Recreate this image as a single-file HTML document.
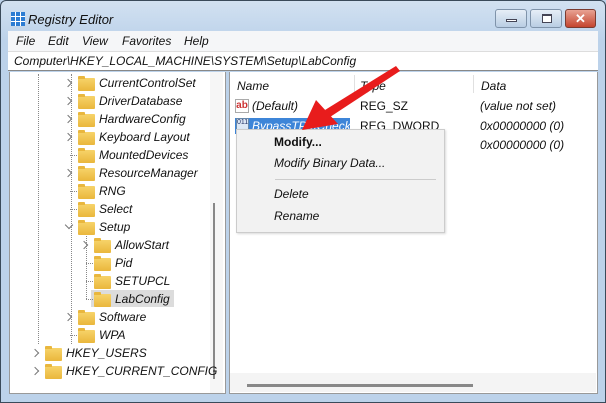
<!DOCTYPE html>
<html><head><style>
*{margin:0;padding:0;box-sizing:border-box}
body{width:606px;height:403px;overflow:hidden;background:#bcd2ea;font-family:"Liberation Sans",sans-serif;font-style:italic;font-size:12px;color:#111;position:relative}
.a{position:absolute;white-space:nowrap}
.f{position:absolute;width:17px;height:13px;background:linear-gradient(#f7d36a,#eab73c);border-radius:1px}
.f:before{content:"";position:absolute;left:0;top:-2px;width:7px;height:3px;background:#e9b73e;border-radius:1px 1px 0 0}
.ch{position:absolute;width:6px;height:6px;border-right:1.5px solid #777;border-bottom:1.5px solid #777}
</style></head><body>
<div class="a" style="left:0;top:0;width:606px;height:403px;border:1px solid #3a4a5a;border-radius:6px 6px 0 0;background:linear-gradient(#d2e1f1,#bcd2ea 40px)"></div>
<div class="a" style="left:11px;top:12px;width:14px;height:14px;background:repeating-linear-gradient(90deg,#2b7cd3 0 4px,#fff 4px 5px),#2b7cd3"></div>
<div class="a" style="left:11px;top:16px;width:14px;height:1px;background:#fff"></div>
<div class="a" style="left:11px;top:21px;width:14px;height:1px;background:#fff"></div>
<div class="a" style="left:28px;top:12px;font-size:13px">Registry Editor</div>
<div class="a" style="left:495px;top:9px;width:32px;height:19px;border:1px solid #7f93aa;border-radius:3px;background:linear-gradient(#e6eef7,#b9cde3)"><div class="a" style="left:10px;top:9px;width:11px;height:3px;border:1px solid #445;background:#fff"></div></div>
<div class="a" style="left:530px;top:9px;width:32px;height:19px;border:1px solid #7f93aa;border-radius:3px;background:linear-gradient(#e6eef7,#b9cde3)"><div class="a" style="left:11px;top:4px;width:10px;height:9px;border:1px solid #445;border-top-width:2px;background:#fff"></div></div>
<div class="a" style="left:565px;top:9px;width:31px;height:19px;border:1px solid #7a3b30;border-radius:3px;background:linear-gradient(#e8a293,#c4452f);color:#fff;font-weight:bold;font-style:normal;text-align:center;font-size:13px;line-height:17px">✕</div>
<div class="a" style="left:8px;top:31px;width:590px;height:20px;background:#f5f6f8"></div>
<div class="a" style="left:16px;top:34px">File</div>
<div class="a" style="left:48px;top:34px">Edit</div>
<div class="a" style="left:82px;top:34px">View</div>
<div class="a" style="left:122px;top:34px">Favorites</div>
<div class="a" style="left:184px;top:34px">Help</div>
<div class="a" style="left:8px;top:51px;width:590px;height:20px;background:#fff;border-top:1px solid #ddd;border-bottom:1px solid #888"></div>
<div class="a" style="left:14px;top:54px">Computer\HKEY_LOCAL_MACHINE\SYSTEM\Setup\LabConfig</div>
<div class="a" style="left:9px;top:72px;width:217px;height:322px;background:#fff;border:1px solid #999;border-top:none"></div>
<div class="a" style="left:210px;top:72px;width:13px;height:321px;background:#f6f6f6"></div>
<div class="a" style="left:213px;top:203px;width:2px;height:176px;background:#888"></div>
<div class="a" style="left:38px;top:74px;height:270px;border-left:1px dotted #888"></div>
<div class="a" style="left:71px;top:74px;height:270px;border-left:1px dotted #888"></div>
<div class="a" style="left:86px;top:236px;height:63px;border-left:1px dotted #888"></div>
<div class="a" style="left:91px;top:290px;width:83px;height:17px;background:#dcdcdc"></div>
<div id="tree"></div>
<div class="a" style="left:229px;top:72px;width:369px;height:322px;background:#fff;border:1px solid #999;border-top:none"></div>
<div class="a" style="left:230px;top:373px;width:366px;height:19px;background:#f4f4f4"></div>
<div class="a" style="left:247px;top:384px;width:226px;height:3px;background:#888"></div>
<div class="a" style="left:354px;top:75px;width:1px;height:18px;background:#e0e0e0"></div>
<div class="a" style="left:473px;top:75px;width:1px;height:18px;background:#e0e0e0"></div>
<div class="a" style="left:237px;top:79px">Name</div>
<div class="a" style="left:360px;top:79px">Type</div>
<div class="a" style="left:481px;top:79px">Data</div>
<div class="a" style="left:235px;top:99px;width:14px;height:14px;border:1px solid #aaa;color:#c33;font-size:10px;font-weight:bold;font-style:normal;line-height:12px;text-align:center">ab</div>
<div class="a" style="left:252px;top:99px">(Default)</div>
<div class="a" style="left:360px;top:99px;font-style:normal">REG_SZ</div>
<div class="a" style="left:480px;top:99px">(value not set)</div>
<div class="a" style="left:235px;top:118px;width:115px;height:16px;background:#3d85d8"></div>
<div class="a" style="left:236px;top:118px;width:13px;height:14px;border:1px solid #68a;background:#dde8f5;font-size:7px;font-style:normal;color:#236;line-height:8px">011</div>
<div class="a" style="left:252px;top:119px;color:#fff">BypassTPMCheck</div>
<div class="a" style="left:360px;top:119px;font-style:normal">REG_DWORD</div>
<div class="a" style="left:480px;top:119px">0x00000000 (0)</div>
<div class="a" style="left:480px;top:138px">0x00000000 (0)</div>
<div class="a" style="left:236px;top:129px;width:209px;height:104px;background:#f2f2f2;border:1px solid #ccc;box-shadow:1px 1px 2px rgba(0,0,0,.15)"></div>
<div class="a" style="left:274px;top:135px;font-weight:bold;font-style:normal">Modify...</div>
<div class="a" style="left:274px;top:156px">Modify Binary Data...</div>
<div class="a" style="left:275px;top:179px;width:161px;height:1px;background:#ccc"></div>
<div class="a" style="left:274px;top:187px">Delete</div>
<div class="a" style="left:274px;top:209px">Rename</div>
<svg class="a" style="left:0;top:0" width="606" height="403"><polygon points="396,66 400,71 330,117 325,110" fill="#e81c1c"/><polygon points="302,130 316,100 338,124" fill="#e81c1c"/></svg>
<script>
var rows=[["CurrentControlSet",1,1],["DriverDatabase",1,1],["HardwareConfig",1,1],["Keyboard Layout",1,1],["MountedDevices",1,0],["ResourceManager",1,1],["RNG",1,0],["Select",1,0],["Setup",1,2],["AllowStart",2,1],["Pid",2,0],["SETUPCL",2,0],["LabConfig",2,0],["Software",1,1],["WPA",1,0],["HKEY_USERS",0,1],["HKEY_CURRENT_CONFIG",0,1]];
var h="";rows.forEach(function(r,i){var y=83+i*18,x=[45,78,94][r[1]];
if(r[2]==1)h+='<div class="ch" style="left:'+(x-13)+'px;top:'+(y-3)+'px;transform:rotate(-45deg)"></div>';
if(r[2]==2)h+='<div class="ch" style="left:'+(x-12)+'px;top:'+(y-5)+'px;transform:rotate(45deg)"></div>';
if(r[2]==0)h+='<div class="a" style="left:'+(x-8)+'px;top:'+y+'px;width:7px;border-top:1px dotted #888"></div>';
h+='<div class="f" style="left:'+x+'px;top:'+(y-5)+'px"></div><div class="a" style="left:'+(x+21)+'px;top:'+(y-7)+'px">'+r[0]+'</div>';});
document.getElementById("tree").innerHTML=h;
</script>
</body></html>
